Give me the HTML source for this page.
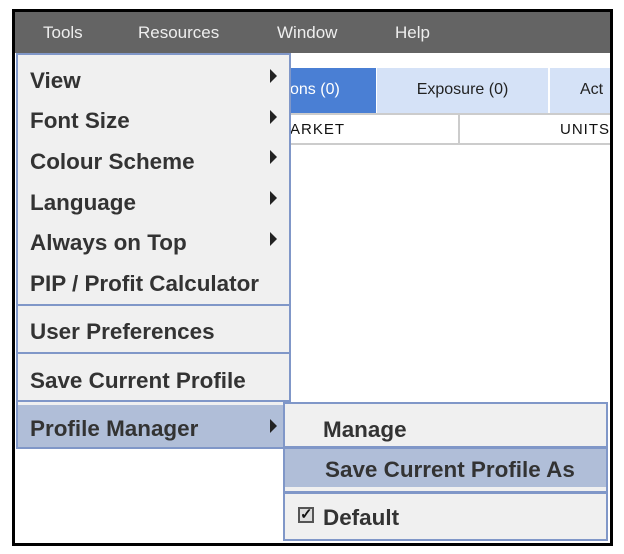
<!DOCTYPE html><html><head><style>
*{margin:0;padding:0;box-sizing:border-box}
body{width:624px;height:554px;background:#fff;position:relative;overflow:hidden;font-family:"Liberation Sans",Arial,sans-serif}
.a{position:absolute}
.frame{left:12px;top:9px;width:601px;height:537px;border:3px solid #000;background:#fff}
.bar{left:15px;top:12px;width:595px;height:41px;background:#646464;color:#eee;font-size:17px}
.bar span{position:absolute;top:11px}
.mi{position:absolute;left:30px;font-size:22px;font-weight:bold;color:#333;transform:scaleX(1.02);transform-origin:left;white-space:nowrap}
.arr{position:absolute;left:270px;width:0;height:0;border-left:7px solid #222;border-top:7px solid transparent;border-bottom:7px solid transparent}
.sep{position:absolute;left:16px;width:274px;height:2px;background:#8097c8}
</style></head><body>
<div class="a frame"></div>
<div class="a bar"><span style="left:28px">Tools</span><span style="left:123px">Resources</span><span style="left:262px">Window</span><span style="left:380px">Help</span></div>
<div class="a" style="left:290px;top:68px;width:86px;height:45px;background:#4a7fd4;color:#fff;font-size:16px;padding:13px 0 0 0">ons (0)</div>
<div class="a" style="left:377px;top:68px;width:171px;height:45px;background:#d5e2f7;color:#222;font-size:16px;text-align:center;padding-top:13px">Exposure (0)</div>
<div class="a" style="left:550px;top:68px;width:60px;height:45px;background:#d5e2f7;color:#222;font-size:16px;padding:13px 0 0 30px">Act</div>
<div class="a" style="left:290px;top:113px;width:320px;height:32px;border-top:2px solid #ccc;border-bottom:2px solid #ccc;font-size:15px;color:#111;letter-spacing:1px"><span class="a" style="left:0;top:6px">ARKET</span><span class="a" style="left:168px;top:-2px;width:2px;height:32px;background:#ccc"></span><span class="a" style="left:270px;top:6px">UNITS</span></div>
<div class="a" style="left:16px;top:53px;width:275px;height:396px;background:#f0f0f0;border:2px solid #8097c8"></div>
<div class="mi" style="top:68px">View</div><div class="arr" style="top:69px"></div>
<div class="mi" style="top:108px">Font Size</div><div class="arr" style="top:110px"></div>
<div class="mi" style="top:149px">Colour Scheme</div><div class="arr" style="top:150px"></div>
<div class="mi" style="top:190px">Language</div><div class="arr" style="top:191px"></div>
<div class="mi" style="top:230px">Always on Top</div><div class="arr" style="top:232px"></div>
<div class="mi" style="top:271px">PIP / Profit Calculator</div>
<div class="sep" style="top:304px"></div>
<div class="mi" style="top:319px">User Preferences</div>
<div class="sep" style="top:352px"></div>
<div class="mi" style="top:368px">Save Current Profile</div>
<div class="sep" style="top:400px"></div>
<div class="a" style="left:18px;top:405px;width:266px;height:42px;background:#b0bed8"></div>
<div class="mi" style="top:416px">Profile Manager</div><div class="arr" style="top:419px"></div>
<div class="a" style="left:283px;top:402px;width:325px;height:139px;background:#f0f0f0;border:2px solid #8097c8"></div>
<div class="mi" style="left:323px;top:417px">Manage</div>
<div class="a" style="left:285px;top:446px;width:321px;height:3px;background:#8097c8"></div>
<div class="a" style="left:285px;top:449px;width:321px;height:38px;background:#b0bed8"></div>
<div class="mi" style="left:325px;top:457px">Save Current Profile As</div>
<div class="a" style="left:285px;top:491px;width:321px;height:3px;background:#8097c8"></div>
<div class="a" style="left:298px;top:507px;width:16px;height:16px;border:2px solid #555;background:#ddd;font-size:15px;line-height:12px;font-weight:bold;color:#111;text-align:center">✓</div>
<div class="mi" style="left:323px;top:505px">Default</div>
</body></html>
